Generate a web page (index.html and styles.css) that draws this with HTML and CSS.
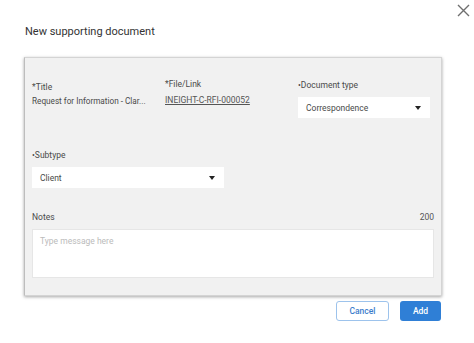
FILE: index.html
```html
<!DOCTYPE html>
<html lang="en">
<head>
    <meta charset="UTF-8">
    <meta name="viewport" content="width=device-width, initial-scale=1.0">
    <title>New supporting document</title>
    <link rel="stylesheet" href="styles.css">
</head>
<body>
    <div class="dialog">
        <button class="close-btn" aria-label="Close">
            <svg width="13" height="13" viewBox="0 0 13 13">
                <path d="M1 1 L12 12 M12 1 L1 12" stroke="#6f6f6f" stroke-width="1.4" fill="none"/>
            </svg>
        </button>

        <div class="dialog-title">New supporting document</div>

        <div class="panel">
            <div class="row">
                <div class="field col-title">
                    <div class="label">*Title</div>
                    <div class="value">Request for Information - Clar...</div>
                </div>
                <div class="field col-file">
                    <div class="label">*File/Link</div>
                    <a class="value link">INEIGHT-C-RFI-000052</a>
                </div>
                <div class="field col-type">
                    <div class="label">•Document type</div>
                    <div class="select">
                        <span>Correspondence</span>
                        <span class="caret"></span>
                    </div>
                </div>
            </div>

            <div class="field subtype">
                <div class="label">•Subtype</div>
                <div class="select select-wide">
                    <span>Client</span>
                    <span class="caret"></span>
                </div>
            </div>

            <div class="field notes">
                <div class="notes-head">
                    <span class="label">Notes</span>
                    <span class="counter">200</span>
                </div>
                <div class="textarea">Type message here</div>
            </div>
        </div>

        <div class="actions">
            <button class="btn btn-cancel">Cancel</button>
            <button class="btn btn-add">Add</button>
        </div>
    </div>
</body>
</html>
```

FILE: styles.css
```css
* {
    margin: 0;
    padding: 0;
    box-sizing: border-box;
}

body {
    font-family: Roboto, 'Liberation Sans', Arial, sans-serif;
    background: white;
    color: #444;
}

.dialog {
    position: relative;
    width: 474px;
    height: 343px;
    padding: 24px 0 0 24px;
}

.close-btn {
    position: absolute;
    top: 4px;
    right: 4px;
    border: none;
    background: none;
    width: 13px;
    height: 13px;
    display: flex;
}

.dialog-title {
    font-size: 11px;
    line-height: 15px;
    color: #333;
    padding-left: 1px;
}

.panel {
    margin-top: 18px;
    width: 418px;
    background: #f1f1f1;
    border: 1px solid #d4d4d4;
    border-left-color: #bdbdbd;
    box-shadow: 0 1px 3px rgba(0, 0, 0, 0.35);
    padding: 20px 7px 17px 7px;
}

.row {
    display: flex;
}

.field {
    display: flex;
    flex-direction: column;
}

.col-title,
.col-file {
    width: 133px;
}

.col-title {
    margin-top: 3px;
}

.col-type {
    width: 132px;
    margin-top: 1px;
}

.label {
    font-size: 8.5px;
    line-height: 12px;
    color: #4a4a4a;
}

.value {
    font-size: 8.2px;
    line-height: 12px;
    color: #4a4a4a;
    margin-top: 2px;
}

.link {
    font-size: 8.5px;
    margin-top: 4px;
    text-decoration: underline;
    color: #555;
}

.select {
    margin-top: 6px;
    height: 21px;
    background: white;
    display: flex;
    align-items: center;
    justify-content: space-between;
    padding: 0 9px 0 8px;
    font-size: 8.5px;
    color: #4a4a4a;
}

.select-wide {
    width: 192px;
}

.caret {
    width: 0;
    height: 0;
    border-left: 3.5px solid transparent;
    border-right: 3.5px solid transparent;
    border-top: 4px solid #222;
}

.subtype {
    margin-top: 31px;
}

.notes {
    margin-top: 23px;
}

.notes-head {
    display: flex;
    justify-content: space-between;
    width: 402px;
}

.counter {
    font-size: 8.5px;
    line-height: 12px;
    color: #555;
}

.textarea {
    margin-top: 6px;
    width: 402px;
    height: 49px;
    background: white;
    border: 1px solid #e6e6e6;
    padding: 6px 7px;
    font-size: 8.5px;
    color: #bbb;
}

.actions {
    width: 417px;
    display: flex;
    justify-content: flex-end;
    gap: 11px;
    margin-top: 5px;
}

.btn {
    height: 20px;
    border-radius: 3px;
    font-family: Roboto, 'Liberation Sans', Arial, sans-serif;
    font-size: 8.5px;
    font-weight: 500;
    cursor: pointer;
}

.btn-cancel {
    width: 53px;
    background: white;
    border: 1px solid #9dc3ec;
    color: #3b7dcc;
}

.btn-add {
    width: 41px;
    background: #2f7fd6;
    border: none;
    color: white;
}
```
